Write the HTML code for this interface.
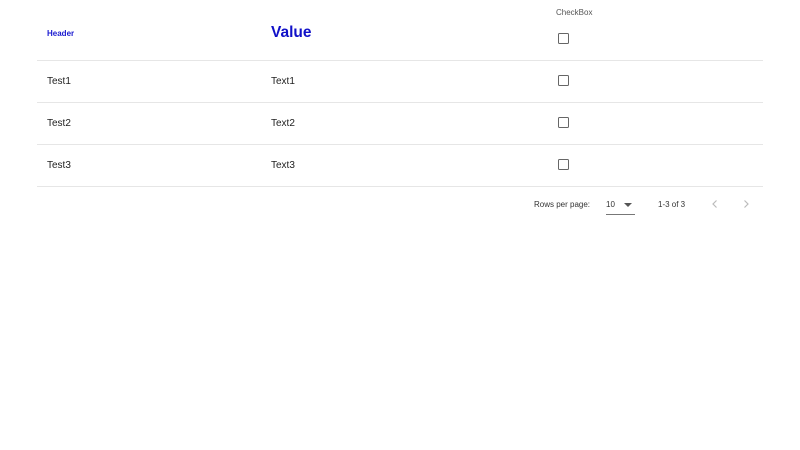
<!DOCTYPE html>
<html><head><style>
body{margin:0;width:800px;height:450px;background:#fff;font-family:"Liberation Sans",sans-serif;position:relative;overflow:hidden}
.a{position:absolute}
.line{position:absolute;left:37px;width:726px;height:1px;background:#e6e6e6}
.cb{position:absolute;left:558px;width:9px;height:9px;border:1.5px solid #666;border-radius:1.5px}
.t{position:absolute;font-size:10px;color:#222}
</style></head><body>
<div class="a" style="left:556px;top:8px;font-size:8px;color:#555">CheckBox</div>
<div class="a" style="left:47px;top:29px;font-size:8px;font-weight:bold;color:#1a1ad0">Header</div>
<div class="a" style="left:271px;top:24px;font-size:15.5px;font-weight:bold;color:#1010c8">Value</div>
<div class="cb" style="top:33px"></div>
<div class="line" style="top:60px"></div>
<div class="t" style="left:47px;top:76px">Test1</div><div class="t" style="left:271px;top:76px">Text1</div><div class="cb" style="top:75px"></div>
<div class="line" style="top:102px"></div>
<div class="t" style="left:47px;top:118px">Test2</div><div class="t" style="left:271px;top:118px">Text2</div><div class="cb" style="top:117px"></div>
<div class="line" style="top:144px"></div>
<div class="t" style="left:47px;top:160px">Test3</div><div class="t" style="left:271px;top:160px">Text3</div><div class="cb" style="top:159px"></div>
<div class="line" style="top:186px"></div>
<div class="a" style="left:534px;top:200px;font-size:8px;color:#333">Rows per page:</div>
<div class="a" style="left:606px;top:200px;font-size:8px;color:#333">10</div>
<div class="a" style="left:624px;top:203px;width:0;height:0;border-left:4px solid transparent;border-right:4px solid transparent;border-top:4px solid #555"></div>
<div class="a" style="left:606px;top:214px;width:29px;height:1px;background:#777"></div>
<div class="a" style="left:658px;top:200px;font-size:8px;color:#333">1-3 of 3</div>
<svg class="a" style="left:710px;top:199px" width="10" height="10"><path d="M6.5 1.5L3 5l3.5 3.5" fill="none" stroke="#bbb" stroke-width="1.2"/></svg>
<svg class="a" style="left:741px;top:199px" width="10" height="10"><path d="M3.5 1.5L7 5 3.5 8.5" fill="none" stroke="#bbb" stroke-width="1.2"/></svg>
</body></html>
